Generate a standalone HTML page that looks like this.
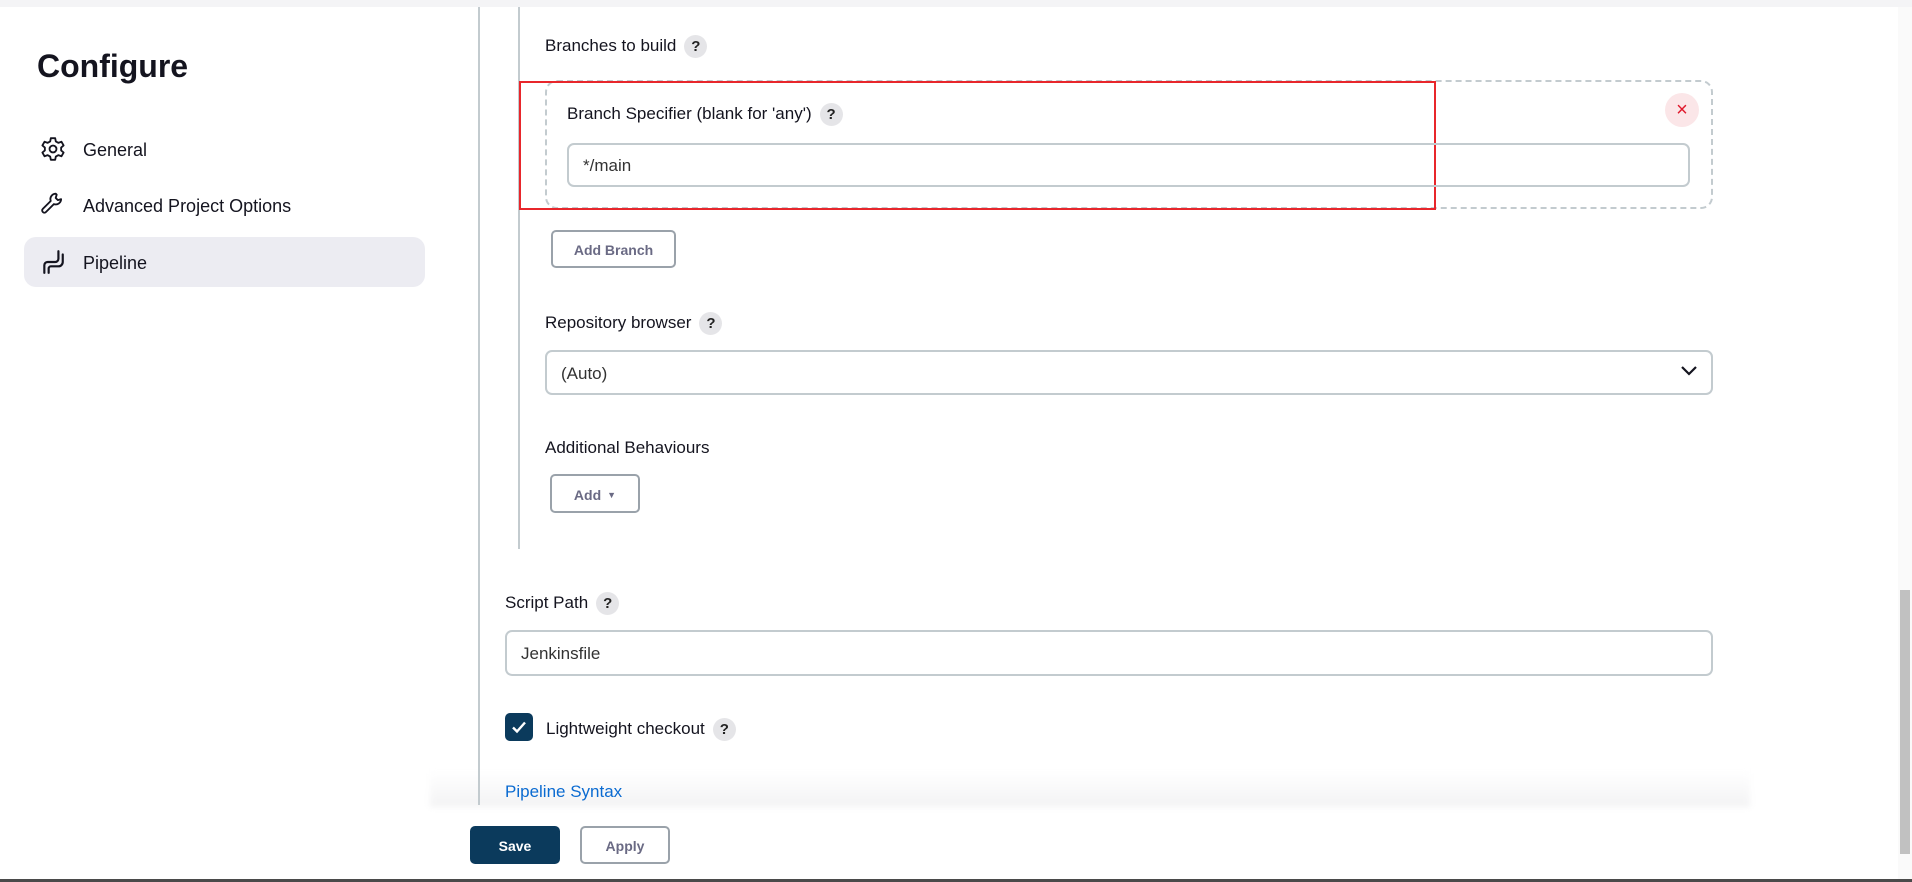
<!DOCTYPE html>
<html><head><meta charset="utf-8"><style>
*{box-sizing:border-box;margin:0;padding:0}
body{width:1912px;height:882px;overflow:hidden;background:#fff;font-family:"Liberation Sans",sans-serif;color:#14141f;position:relative}
.a{position:absolute}
.lbl{font-size:17px;color:#14141f;white-space:nowrap;line-height:22px}
.q{display:inline-block;width:23px;height:23px;border-radius:50%;background:#e5e5e8;color:#222;font-size:15px;font-weight:bold;text-align:center;line-height:23px;margin-left:8px;vertical-align:middle}
.inp{border:2px solid #c3cbcf;border-radius:7px;font-size:17px;padding-left:14px;padding-top:2px;display:flex;align-items:center;color:#333}
.btn{border:2px solid #9aa2aa;border-radius:5px;font-size:14px;font-weight:bold;color:#6a6a84;display:flex;align-items:center;justify-content:center;padding-top:2px}
.nav{font-size:18px;color:#14141f}
</style></head><body>
<div class="a" style="left:0;top:0;width:1912px;height:7px;background:#f4f4f6"></div>
<div class="a" style="left:37px;top:48px;font-size:32px;font-weight:bold">Configure</div>
<svg class="a" style="left:40px;top:136px" width="26" height="26" viewBox="0 0 24 24" fill="none" stroke="#14141f" stroke-width="1.7" stroke-linejoin="round"><path d="M10 2h4l.6 3 2.3 1.3 2.9-1 2 3.4-2.3 2v2.6l2.3 2-2 3.4-2.9-1L14.6 19 14 22h-4l-.6-3-2.3-1.3-2.9 1-2-3.4 2.3-2V10.7l-2.3-2 2-3.4 2.9 1L9.4 5z"/><circle cx="12" cy="12" r="3.2"/></svg>
<div class="a nav" style="left:83px;top:140px">General</div>
<svg class="a" style="left:40px;top:191px" width="26" height="26" viewBox="0 0 24 24" fill="none" stroke="#14141f" stroke-width="1.7" stroke-linejoin="round"><path d="M14.5 2.5a5 5 0 0 0-4.6 6.7L2.6 16.5a2 2 0 0 0 2.9 2.9l7.3-7.3a5 5 0 0 0 6.7-4.6l-3 .9-2-2 .9-3z"/></svg>
<div class="a nav" style="left:83px;top:196px">Advanced Project Options</div>
<div class="a" style="left:24px;top:237px;width:401px;height:50px;background:#ececf2;border-radius:12px"></div>
<svg class="a" style="left:40px;top:249px" width="26" height="26" viewBox="0 0 24 24" fill="none" stroke="#14141f" stroke-width="2" stroke-linecap="round"><path d="M4 22v-7a3 3 0 0 1 3-3h7a3 3 0 0 0 3-3V2"/><path d="M8 22v-4a2 2 0 0 1 2-2h7a4 4 0 0 0 4-4V5"/></svg>
<div class="a nav" style="left:83px;top:253px">Pipeline</div>

<div class="a" style="left:518px;top:7px;width:2px;height:542px;background:#c3cbcf"></div>

<div class="a lbl" style="left:545px;top:35px">Branches to build<span class="q">?</span></div>
<div class="a" style="left:545px;top:80px;width:1168px;height:129px;border:2px dashed #c3cbcf;border-radius:12px"></div>
<div class="a" style="left:519px;top:81px;width:917px;height:129px;border:2px solid #e8262b"></div>
<div class="a lbl" style="left:567px;top:103px">Branch Specifier (blank for 'any')<span class="q">?</span></div>
<div class="a inp" style="left:567px;top:143px;width:1123px;height:44px">*/main</div>
<div class="a" style="left:1665px;top:93px;width:34px;height:34px;border-radius:50%;background:#fbe6e8;color:#e0192c;font-size:20px;text-align:center;line-height:35px">×</div>
<div class="a btn" style="left:551px;top:230px;width:125px;height:38px">Add Branch</div>

<div class="a lbl" style="left:545px;top:312px">Repository browser<span class="q">?</span></div>
<div class="a inp" style="left:545px;top:350px;width:1168px;height:45px">(Auto)</div>
<svg class="a" style="left:1680px;top:364px" width="18" height="14" viewBox="0 0 18 14" fill="none" stroke="#14141f" stroke-width="2.2"><path d="M2 3l7 7 7-7"/></svg>
<div class="a lbl" style="left:545px;top:437px">Additional Behaviours</div>
<div class="a btn" style="left:550px;top:474px;width:90px;height:39px">Add <span style="font-size:9px;margin-left:6px">▼</span></div>

<div class="a lbl" style="left:505px;top:592px">Script Path<span class="q">?</span></div>
<div class="a inp" style="left:505px;top:630px;width:1208px;height:46px">Jenkinsfile</div>
<div class="a" style="left:505px;top:713px;width:28px;height:28px;border-radius:5px;background:#0b3a5c"></div>
<svg class="a" style="left:510px;top:718px" width="18" height="18" viewBox="0 0 18 18" fill="none" stroke="#fff" stroke-width="2.4"><path d="M3 9.5l4 4 8-9"/></svg>
<div class="a lbl" style="left:546px;top:718px">Lightweight checkout<span class="q">?</span></div>

<div class="a" style="left:430px;top:770px;width:1320px;height:37px;background:linear-gradient(#fff,#f3f3f4);filter:blur(3px)"></div>
<div class="a" style="left:478px;top:7px;width:2px;height:798px;background:#c3cbcf"></div>
<div class="a" style="left:505px;top:782px;font-size:17px;color:#0b6bd1">Pipeline Syntax</div>
<div class="a" style="left:470px;top:826px;width:90px;height:38px;border-radius:5px;background:#0b3a5c;color:#fff;font-size:14px;font-weight:bold;display:flex;align-items:center;justify-content:center;padding-top:2px">Save</div>
<div class="a btn" style="left:580px;top:826px;width:90px;height:38px">Apply</div>

<div class="a" style="left:1898px;top:7px;width:14px;height:872px;background:#fafafa"></div>
<div class="a" style="left:1900px;top:590px;width:10px;height:264px;background:#c1c1c1"></div>
<div class="a" style="left:0;top:879px;width:1912px;height:3px;background:#4a4a4a"></div>
</body></html>
